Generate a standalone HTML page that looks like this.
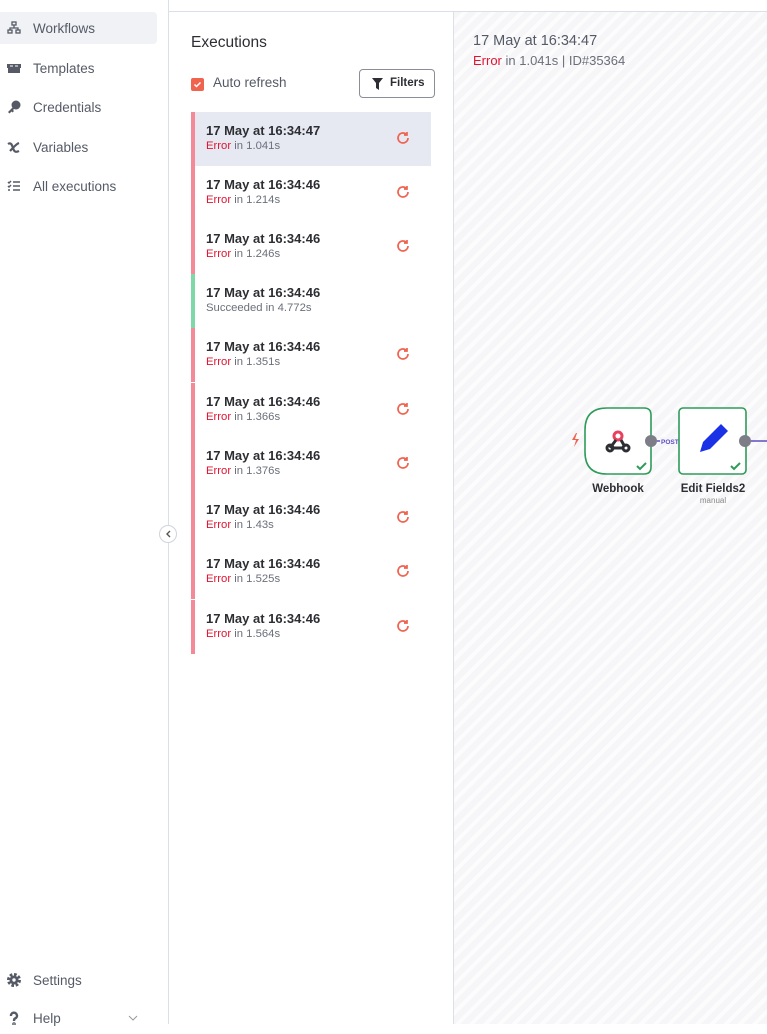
<!DOCTYPE html>
<html><head><meta charset="utf-8"><style>
*{box-sizing:border-box;margin:0;padding:0}
body{width:767px;height:1024px;overflow:hidden;font-family:"Liberation Sans","DejaVu Sans",sans-serif;background:#fff;position:relative}
.side{position:absolute;left:0;top:0;width:169px;height:1024px;border-right:1px solid #dbdfe7;background:#fff}
.nav{position:absolute;left:0;width:157px;height:32px;display:flex;align-items:center;font-size:13.5px;color:#555a66}
.nav.act{background:#f0f2f6;border-radius:0 4px 4px 0}
.nav svg{position:absolute;left:7px}
.nav span{position:absolute;left:33px}
.topline{position:absolute;left:169px;top:11px;width:598px;height:1px;background:#dbdfe7}
.panel{position:absolute;left:169px;top:12px;width:285px;height:1012px;border-right:1px solid #dbdfe7;background:#fff}
.canvas{position:absolute;left:454px;top:12px;width:313px;height:1012px;background:repeating-linear-gradient(135deg,#f6f6f8 0 6px,#fcfcfd 6px 10px)}
.row{position:absolute;left:191px;width:240px;height:54px;border-left:4px solid #f48a97}
.row.ok{border-left-color:#7fd8a8}
.row.sel{background:#e6e9f2}
.row .t{position:absolute;left:11px;top:11px;font-size:13px;font-weight:bold;color:#2d2e33}
.row .s{position:absolute;left:11px;top:28px;font-size:11.3px;color:#6b6f7a}
.row .s b{font-weight:normal;color:#e3132f}
.row svg{position:absolute;left:201px;top:19px}
</style></head><body>
<div class="side">
 <div class="nav act" style="top:12px"><svg width="14" height="14" viewBox="0 0 14 14" fill="none" stroke="#555a66" stroke-width="1.3"><rect x="5" y="1" width="4" height="3"/><rect x="1" y="9" width="4" height="3"/><rect x="9" y="9" width="4" height="3"/><path d="M7 4v3M3 9V7h8v2"/></svg><span>Workflows</span></div>
 <div class="nav" style="top:52px"><svg width="14" height="14" viewBox="0 0 14 14"><path d="M0 3h14v4H0zM1 6h12v6H1z" fill="#555a66"/><path d="M3 5h3M8 5h3" stroke="#fff"/></svg><span>Templates</span></div>
 <div class="nav" style="top:91px"><svg width="14" height="14" viewBox="0 0 14 14"><circle cx="9" cy="5" r="4.5" fill="#555a66"/><path d="M7 6L1 12l1.5 1.5 2-2 1 1 1.5-1.5-1-1 2-2" fill="#555a66"/></svg><span>Credentials</span></div>
 <div class="nav" style="top:131px"><svg width="14" height="14" viewBox="0 0 14 14" fill="none" stroke="#555a66" stroke-width="2.2"><path d="M1 4c3-2 4 1 5 4s2 5 6 3M12 3c-3 1-6 5-9 8"/></svg><span>Variables</span></div>
 <div class="nav" style="top:170px"><svg width="14" height="14" viewBox="0 0 14 14" fill="none" stroke="#555a66" stroke-width="1.5"><path d="M1 3l1 1 2-2M1 7l1 1 2-2M6 3h7M6 7h7M6 11h7M1 11h2"/></svg><span>All executions</span></div>
 <div class="nav" style="top:964px"><svg width="14" height="14" viewBox="0 0 14 14"><circle cx="7" cy="7" r="5.5" fill="none" stroke="#555a66" stroke-width="3" stroke-dasharray="2.6 1.7"/><circle cx="7" cy="7" r="4.5" fill="#555a66"/><circle cx="7" cy="7" r="1.7" fill="#fff"/></svg><span>Settings</span></div>
 <div class="nav" style="top:1002px"><svg width="14" height="14" viewBox="0 0 14 14" fill="none" stroke="#555a66" stroke-width="2.4"><path d="M4 5a3 3 0 1 1 4 2.5C7 8 7 9 7 10"/><circle cx="7" cy="13" r="0.6"/></svg><span>Help</span><svg style="left:128px" width="10" height="6" viewBox="0 0 10 6" fill="none" stroke="#999"><path d="M1 1l4 4 4-4"/></svg></div>
</div>
<div class="topline"></div>
<div class="panel"></div>
<div style="position:absolute;left:159px;top:525px;width:18px;height:18px;border:1px solid #cfd3db;border-radius:50%;background:#fff;display:flex;align-items:center;justify-content:center;z-index:5"><svg width="6" height="8" viewBox="0 0 6 8" fill="none" stroke="#555" stroke-width="1.4"><path d="M5 1L2 4l3 3"/></svg></div>
<div style="position:absolute;left:191px;top:34px;font-size:15.5px;color:#2d2e33">Executions</div>
<div style="position:absolute;left:191px;top:78px;width:13px;height:13px;background:#f0634f;border-radius:2px"><svg width="13" height="13" viewBox="0 0 13 13" fill="none" stroke="#fff" stroke-width="1.5"><path d="M3.5 6.5l2 2 4-4"/></svg></div>
<div style="position:absolute;left:213px;top:75px;font-size:13.5px;color:#555a66">Auto refresh</div>
<div style="position:absolute;left:359px;top:69px;width:76px;height:29px;border:1px solid #8b8e96;border-radius:4px;font-size:11.5px;font-weight:bold;color:#2d2e33;padding:7px 0 0 30px">Filters<svg style="position:absolute;left:12px;top:8px" width="11" height="12" viewBox="0 0 11 12"><path d="M0 0h11L7 5v7L4 10V5z" fill="#2d2e33"/></svg></div>

<div class="row sel" style="top:112px"><div class="t">17 May at 16:34:47</div><div class="s"><b>Error</b> in 1.041s</div><svg width="14" height="14" viewBox="0 0 14 14" fill="none" stroke="#f0634f" stroke-width="1.7"><path d="M12 7a5 5 0 1 1-1.5-3.6M11 1v3H8"/></svg></div>
<div class="row" style="top:166px"><div class="t">17 May at 16:34:46</div><div class="s"><b>Error</b> in 1.214s</div><svg width="14" height="14" viewBox="0 0 14 14" fill="none" stroke="#f0634f" stroke-width="1.7"><path d="M12 7a5 5 0 1 1-1.5-3.6M11 1v3H8"/></svg></div>
<div class="row" style="top:220px"><div class="t">17 May at 16:34:46</div><div class="s"><b>Error</b> in 1.246s</div><svg width="14" height="14" viewBox="0 0 14 14" fill="none" stroke="#f0634f" stroke-width="1.7"><path d="M12 7a5 5 0 1 1-1.5-3.6M11 1v3H8"/></svg></div>
<div class="row ok" style="top:274px"><div class="t">17 May at 16:34:46</div><div class="s">Succeeded in 4.772s</div></div>
<div class="row" style="top:328px"><div class="t">17 May at 16:34:46</div><div class="s"><b>Error</b> in 1.351s</div><svg width="14" height="14" viewBox="0 0 14 14" fill="none" stroke="#f0634f" stroke-width="1.7"><path d="M12 7a5 5 0 1 1-1.5-3.6M11 1v3H8"/></svg></div>
<div class="row" style="top:383px"><div class="t">17 May at 16:34:46</div><div class="s"><b>Error</b> in 1.366s</div><svg width="14" height="14" viewBox="0 0 14 14" fill="none" stroke="#f0634f" stroke-width="1.7"><path d="M12 7a5 5 0 1 1-1.5-3.6M11 1v3H8"/></svg></div>
<div class="row" style="top:437px"><div class="t">17 May at 16:34:46</div><div class="s"><b>Error</b> in 1.376s</div><svg width="14" height="14" viewBox="0 0 14 14" fill="none" stroke="#f0634f" stroke-width="1.7"><path d="M12 7a5 5 0 1 1-1.5-3.6M11 1v3H8"/></svg></div>
<div class="row" style="top:491px"><div class="t">17 May at 16:34:46</div><div class="s"><b>Error</b> in 1.43s</div><svg width="14" height="14" viewBox="0 0 14 14" fill="none" stroke="#f0634f" stroke-width="1.7"><path d="M12 7a5 5 0 1 1-1.5-3.6M11 1v3H8"/></svg></div>
<div class="row" style="top:545px"><div class="t">17 May at 16:34:46</div><div class="s"><b>Error</b> in 1.525s</div><svg width="14" height="14" viewBox="0 0 14 14" fill="none" stroke="#f0634f" stroke-width="1.7"><path d="M12 7a5 5 0 1 1-1.5-3.6M11 1v3H8"/></svg></div>
<div class="row" style="top:600px"><div class="t">17 May at 16:34:46</div><div class="s"><b>Error</b> in 1.564s</div><svg width="14" height="14" viewBox="0 0 14 14" fill="none" stroke="#f0634f" stroke-width="1.7"><path d="M12 7a5 5 0 1 1-1.5-3.6M11 1v3H8"/></svg></div>

<div class="canvas"></div>
<div style="position:absolute;left:473px;top:33px;font-size:14.5px;color:#555a66">17 May at 16:34:47</div>
<div style="position:absolute;left:473px;top:53px;font-size:13px;color:#6b6f7a"><span style="color:#e3132f">Error</span> in 1.041s | ID#35364</div>

<svg style="position:absolute;left:454px;top:400px" width="313" height="110" viewBox="454 400 313 110">
 <path d="M576 433l-4 7h4l-2 7 5-8h-4l2-6z" fill="#f0634f"/>
 <path d="M585 441V430q0-22 22-22h37q7 0 7 7v52q0 7-7 7h-37q-22 0-22-22z" fill="#fff" stroke="#2f9b5a" stroke-width="1.6"/>
 <g fill="none" stroke-width="3"><circle cx="618" cy="436" r="4" stroke="#e8415e"/><path d="M616 440l-6 8" stroke="#2d2e33"/><path d="M621 440l4 7M611 448h11" stroke="#2d2e33"/><circle cx="610" cy="448" r="3" stroke="#2d2e33"/><circle cx="626" cy="448" r="3" stroke="#2d2e33"/></g>
 <path d="M637 466l3 3 6-6" fill="none" stroke="#2f9b5a" stroke-width="2"/>
 <circle cx="651" cy="441" r="6" fill="#7d7d87"/>
 <path d="M657 441h24" stroke="#5b4fc4" stroke-width="1.5"/>
 <rect x="660" y="437" width="22" height="9" fill="#f6f6f8"/>
 <text x="661" y="444" font-size="6.5" font-weight="bold" fill="#5b4fc4" font-family="Liberation Sans">POST</text>
 <rect x="679" y="408" width="67" height="66" rx="4" fill="#fff" stroke="#2f9b5a" stroke-width="1.6"/>
 <path d="M700 452l3-10 15-15 7 7-15 15z M718 427l3-3 7 7-3 3z" fill="#1a31e6"/>
 <path d="M731 466l3 3 6-6" fill="none" stroke="#2f9b5a" stroke-width="2"/>
 <circle cx="745" cy="441" r="6" fill="#7d7d87"/>
 <path d="M751 441h16" stroke="#5b4fc4" stroke-width="1.5"/>
 <text x="618" y="492" font-size="11.5" font-weight="bold" fill="#2d2e33" text-anchor="middle" font-family="Liberation Sans">Webhook</text>
 <text x="713" y="492" font-size="11.5" font-weight="bold" fill="#2d2e33" text-anchor="middle" font-family="Liberation Sans">Edit Fields2</text>
 <text x="713" y="503" font-size="8" fill="#888" text-anchor="middle" font-family="Liberation Sans">manual</text>
</svg>
</body></html>
